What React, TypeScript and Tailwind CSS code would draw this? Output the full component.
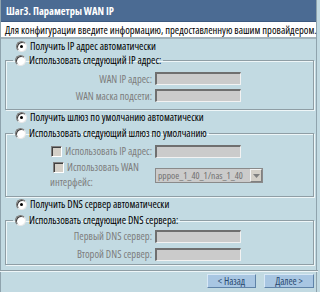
import React from "react";

const Radio = ({ checked }: { checked?: boolean }) => (
  <span className="relative inline-block w-[11px] h-[11px] rounded-full bg-white border border-t-[#7a7a7a] border-l-[#7a7a7a] border-r-[#e8e8e8] border-b-[#e8e8e8] shadow-[inset_1px_1px_0_#404040] shrink-0">
    {checked && <span className="absolute left-[3px] top-[3px] w-[3px] h-[3px] rounded-full bg-black" />}
  </span>
);

const Check = () => (
  <span className="inline-block w-[11px] h-[11px] bg-[#d4d0c8] border border-t-[#808080] border-l-[#808080] border-r-[#ffffff] border-b-[#ffffff] shadow-[inset_1px_1px_0_#404040] shrink-0" />
);

const Input = () => (
  <span className="inline-block w-[86px] h-[13px] bg-[#cbcbcb] border-t-2 border-l-2 border-t-[#6f6f6f] border-l-[#6f6f6f] border-b border-r border-b-[#f2f2f2] border-r-[#f2f2f2]" />
);

const Row = ({ label, h }: { label: string; h: string }) => (
  <div className={`flex items-center ${h}`}>
    <div className="w-[149px] text-right pr-[3px] text-[#7d7d7d]">{label}</div>
    <Input />
  </div>
);

const fs = "ml-[4px] w-[309px] border border-[#8f9ea5] shadow-[inset_1px_1px_0_#eef6f8,1px_1px_0_#eef6f8]";

const TopRadio = ({ children }: { children: React.ReactNode }) => (
  <div className="flex items-center gap-[3px] pl-[15px] h-[14px] font-medium">
    <Radio checked />
    <span>{children}</span>
  </div>
);

const Legend = ({ children }: { children: React.ReactNode }) => (
  <legend className="ml-[7px] px-[2px] h-[14px] font-medium">
    <span className="flex items-center gap-[3px] h-[14px]">
      <Radio />
      <span>{children}</span>
    </span>
  </legend>
);

export default function App() {
  return (
    <div className="w-[320px] h-[292px] bg-[#c2dae2] overflow-hidden font-['Open_Sans',sans-serif] [font-stretch:75%]">
      <div className="w-[317px] h-[292px] border-l border-r border-[#8fa3ad] text-[10.5px] leading-[14px] text-black flex flex-col">
        <div className="h-[22px] shrink-0 bg-[#4b6b93] text-white font-bold flex items-center pl-[5px] border-b border-[#3d5a80]">
          Шаг3. Параметры WAN IP
        </div>
        <div className="h-[17px] shrink-0 bg-white flex items-center pl-[4px] border-b-2 border-[#a3b3bb] whitespace-nowrap">
          Для конфигурации введите информацию, предоставленную вашим провайдером.
        </div>

        <TopRadio>Получить IP адрес автоматически</TopRadio>

        <fieldset className={`${fs} pb-[5px]`}>
          <Legend>Использовать следующий IP адрес:</Legend>
          <div className="mt-[3px]">
            <Row label="WAN IP адрес:" h="h-[17px]" />
            <Row label="WAN маска подсети:" h="h-[17px]" />
          </div>
        </fieldset>

        <TopRadio>Получить шлюз по умолчанию автоматически</TopRadio>

        <fieldset className={`${fs} mt-[2px] pb-[5px]`}>
          <Legend>Использовать следующий шлюз по умолчанию</Legend>
          <div className="mt-[3px]">
            <div className="flex items-center h-[16px]">
              <div className="w-[149px] flex items-center justify-end pr-[3px] gap-[3px] text-[#7d7d7d]">
                <Check />
                <span>Использовать IP адрес:</span>
              </div>
              <Input />
            </div>
            <div className="flex items-center h-[32px]">
              <div className="w-[149px] pl-[44px] text-[#7d7d7d] leading-[15px]">
                <div className="flex items-center gap-[3px] pl-[3px]"><Check /><span>Использовать WAN</span></div>
                <div>интерфейс:</div>
              </div>
              <span className="inline-flex items-center w-[108px] h-[15px] bg-[#cbcbcb] border border-[#8a8a8a] text-[#707070] text-[9.5px] pl-[2px] mt-[1px]">
                <span className="flex-1 whitespace-nowrap overflow-hidden">pppoe_1_40_1/nas_1_40</span>
                <span className="w-[12px] h-[13px] bg-[#d4d0c8] border border-t-[#f4f4f4] border-l-[#f4f4f4] border-r-[#808080] border-b-[#808080] flex items-center justify-center shrink-0">
                  <svg width="7" height="4" viewBox="0 0 7 4"><path d="M0 0h7L3.5 4z" fill="#808080" /></svg>
                </span>
              </span>
            </div>
          </div>
        </fieldset>

        <TopRadio>Получить DNS сервер автоматически</TopRadio>

        <fieldset className={`${fs} mt-[2px] pb-[1px]`}>
          <Legend>Использовать следующие DNS сервера:</Legend>
          <div>
            <Row label="Первый DNS сервер:" h="h-[18px]" />
            <Row label="Второй DNS сервер:" h="h-[18px]" />
          </div>
        </fieldset>

        <div className="mt-[5px] -ml-px w-[318px] border-t border-[#8f9ea5] shadow-[inset_0_1px_0_#eef6f8] flex justify-end gap-[8px] pr-[4px] pt-[3px]">
          <button className="w-[49px] h-[14px] bg-[#a8c6e2] border border-t-[#d8e8f6] border-l-[#d8e8f6] border-r-[#5f83a8] border-b-[#5f83a8] text-[#2a4a70] text-[10px] leading-none flex items-center justify-center">&lt; Назад</button>
          <button className="w-[50px] h-[14px] bg-[#a8c6e2] border border-t-[#d8e8f6] border-l-[#d8e8f6] border-r-[#5f83a8] border-b-[#5f83a8] text-[#2a4a70] text-[10px] leading-none flex items-center justify-center">Далее &gt;</button>
        </div>
      </div>
    </div>
  );
}
